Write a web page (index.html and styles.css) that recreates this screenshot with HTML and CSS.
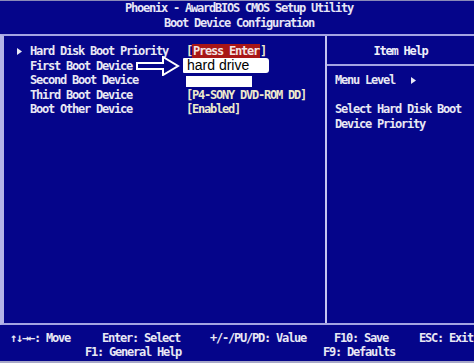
FILE: index.html
```html
<!DOCTYPE html>
<html>
<head>
<meta charset="utf-8">
<link rel="stylesheet" href="styles.css">
</head>
<body>
<div class="screen">
  <header class="header">
    <div>Phoenix - AwardBIOS CMOS Setup Utility</div>
    <div>Boot Device Configuration</div>
  </header>
  <main class="frame">
    <section class="menu-panel">
      <div class="menu">
        <span class="marker"><svg width="5" height="7" viewBox="0 0 5 7"><polygon points="0,0 5,3.5 0,7" fill="#e8e8f4"/></svg></span>
        <span class="label">Hard Disk Boot Priority</span>
        <span class="value">[<span class="sel">Press Enter</span>]</span>

        <span class="marker"></span>
        <span class="label">First Boot Device</span>
        <span class="value"><span class="paint paint-1">hard drive</span></span>

        <span class="marker"></span>
        <span class="label">Second Boot Device</span>
        <span class="value"><span class="paint paint-2"></span></span>

        <span class="marker"></span>
        <span class="label">Third Boot Device</span>
        <span class="value">[P4-SONY DVD-ROM DD]</span>

        <span class="marker"></span>
        <span class="label">Boot Other Device</span>
        <span class="value">[Enabled]</span>
      </div>
      <svg class="pointer" width="44" height="20" viewBox="0 0 44 20">
        <polygon points="1,7 27,7 27,1 42,10 27,19 27,13 1,13" fill="#05058a" stroke="#ffffff" stroke-width="2" stroke-linejoin="miter"/>
      </svg>
    </section>
    <aside class="help-panel">
      <div class="help-title">Item Help</div>
      <div class="help-body">
        <div class="help-line">Menu Level <span class="lvl"><svg width="5" height="7" viewBox="0 0 5 7"><polygon points="0,0 5,3.5 0,7" fill="#e8e8f4"/></svg></span></div>
        <div class="help-line">&nbsp;</div>
        <div class="help-line">Select Hard Disk Boot</div>
        <div class="help-line">Device Priority</div>
      </div>
    </aside>
  </main>
  <footer class="footer">
    <div class="keys keys-1">
      <span>↑↓→←: Move</span>
      <span>Enter: Select</span>
      <span>+/-/PU/PD: Value</span>
      <span>F10: Save</span>
      <span>ESC: Exit</span>
    </div>
    <div class="keys keys-2">
      <span>F1: General Help</span>
      <span>F9: Defaults</span>
    </div>
  </footer>
</div>
</body>
</html>
```

FILE: styles.css
```css
html, body {
  margin: 0;
  padding: 0;
}
body {
  width: 474px;
  height: 363px;
  overflow: hidden;
  background: #05058a;
  color: #e8e8f4;
  font-family: "DejaVu Sans Mono", "Liberation Mono", monospace;
  font-weight: bold;
  font-size: 12px;
  letter-spacing: -1.22px;
}
.screen {
  display: flex;
  flex-direction: column;
  height: 363px;
}
.header {
  box-sizing: border-box;
  height: 34px;
  border-top: 1px solid #8a8ab8;
  text-align: center;
  line-height: 15px;
  padding-left: 4px;
  color: #e6e6f6;
}
.frame {
  flex: 1;
  display: flex;
  border-top: 2px solid #a4a4e2;
  border-bottom: 2px solid #a4a4e2;
  border-left: 4px solid #b4b4e8;
}
.menu-panel {
  position: relative;
  width: 321px;
  box-sizing: border-box;
  padding: 8px 0 0 13px;
}
.menu {
  display: grid;
  grid-template-columns: 13px 156px auto;
  grid-auto-rows: 14.5px;
  line-height: 14.5px;
  align-items: center;
}
.marker {
  display: flex;
  align-items: center;
  height: 14.5px;
}
.value {
  color: #ece9cc;
  display: flex;
  align-items: center;
  height: 14.5px;
  white-space: pre;
}
.sel {
  background: #a81616;
  color: #f4e4e4;
  padding: 0 1px;
}
.paint {
  display: block;
  background: #ffffff;
  color: #000000;
  font-family: "Liberation Sans", Arial, sans-serif;
  font-weight: normal;
  letter-spacing: 0;
}
.paint-1 {
  margin-left: -3px;
  width: 82px;
  height: 15px;
  line-height: 15px;
  font-size: 14px;
  padding-left: 4px;
  border-radius: 1px 3px 3px 1px;
}
.paint-2 {
  width: 66px;
  height: 11px;
  margin-top: 2px;
}
.pointer {
  position: absolute;
  left: 132px;
  top: 20px;
}
.help-panel {
  flex: 1;
  border-left: 2px solid #c4c4f0;
  display: flex;
  flex-direction: column;
}
.help-title {
  box-sizing: border-box;
  height: 30px;
  padding-top: 8px;
  line-height: 14.5px;
  text-align: center;
  border-bottom: 2px solid #a4a4e2;
  color: #f0f0fa;
}
.help-body {
  padding: 7px 0 0 8px;
  line-height: 14px;
}
.help-line {
  display: flex;
  align-items: center;
  height: 14.5px;
}
.lvl {
  display: inline-flex;
  margin-left: 16px;
}
.footer {
  box-sizing: border-box;
  height: 38px;
  padding-top: 7px;
  line-height: 13.5px;
  border-bottom: 2px solid #a8a8c8;
}
.keys {
  display: grid;
  white-space: pre;
}
.keys-1 {
  grid-template-columns: 92px 108px 124px 85px auto;
  padding-left: 10px;
}
.keys-2 {
  grid-template-columns: 238px auto;
  padding-left: 85px;
}
```
